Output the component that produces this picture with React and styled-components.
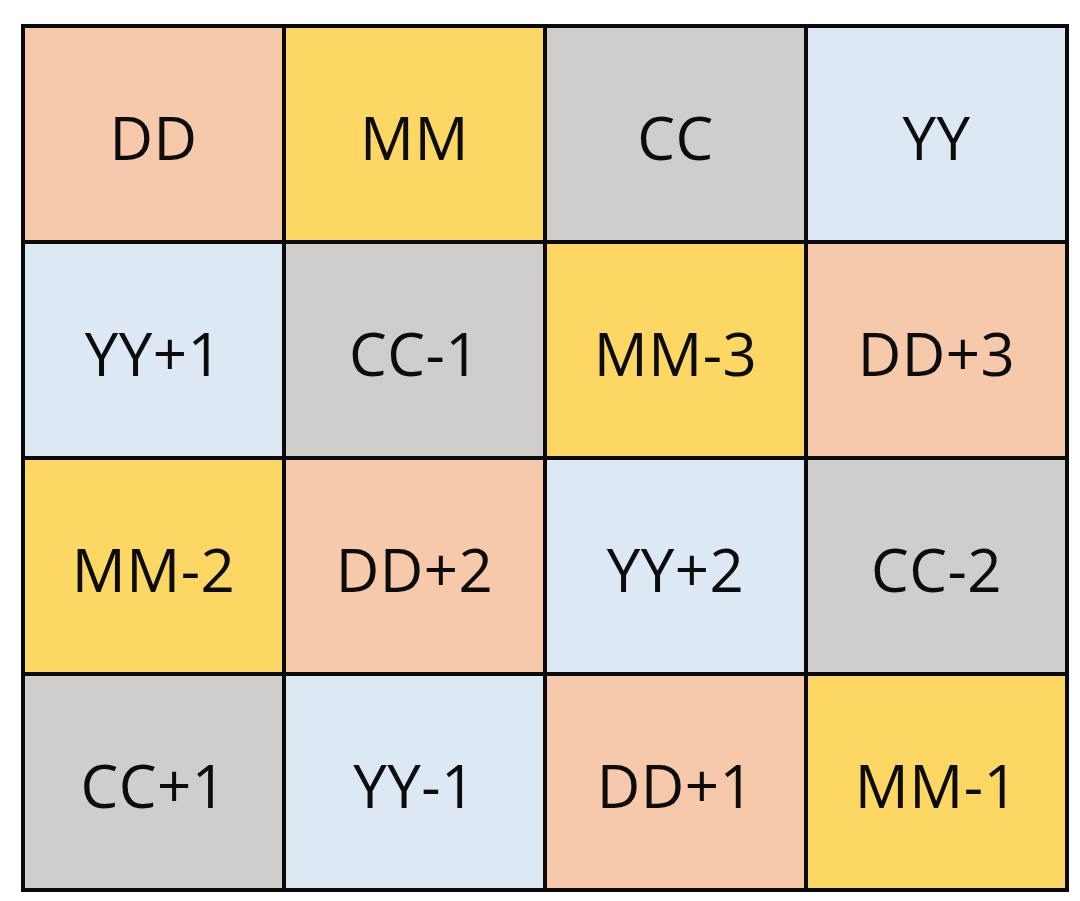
import React from 'react';
import styled, { createGlobalStyle } from 'styled-components';

const GlobalStyle = createGlobalStyle`
  html, body {
    margin: 0;
    padding: 0;
    background: #ffffff;
  }
`;

const Page = styled.div`
  width: 1080px;
  height: 901px;
  padding: 24px 0 0 21px;
  box-sizing: border-box;
`;

const Grid = styled.div`
  display: grid;
  grid-template-columns: repeat(4, 257px);
  grid-template-rows: repeat(4, 212px);
  gap: 4px;
  padding: 4px;
  width: fit-content;
  background: #0a0a0a;
`;

const COLORS = {
  peach: '#f7c9ab',
  gold: '#fdd764',
  gray: '#d0cdcd',
  blue: '#dce9f4',
};

const Cell = styled.div`
  display: flex;
  align-items: center;
  justify-content: center;
  padding-top: 6px;
  box-sizing: border-box;
  background: ${props => COLORS[props.tone]};
  color: #0c0c0c;
  font-family: "Open Sans", "Liberation Sans", sans-serif;
  font-size: 60px;
  letter-spacing: 0.5px;
`;

const cells = [
  ['DD', 'peach'], ['MM', 'gold'], ['CC', 'gray'], ['YY', 'blue'],
  ['YY+1', 'blue'], ['CC-1', 'gray'], ['MM-3', 'gold'], ['DD+3', 'peach'],
  ['MM-2', 'gold'], ['DD+2', 'peach'], ['YY+2', 'blue'], ['CC-2', 'gray'],
  ['CC+1', 'gray'], ['YY-1', 'blue'], ['DD+1', 'peach'], ['MM-1', 'gold'],
];

export default function App() {
  return (
    <>
      <GlobalStyle />
      <Page>
        <Grid>
          {cells.map(([label, tone], i) => (
            <Cell key={i} tone={tone}>{label}</Cell>
          ))}
        </Grid>
      </Page>
    </>
  );
}
